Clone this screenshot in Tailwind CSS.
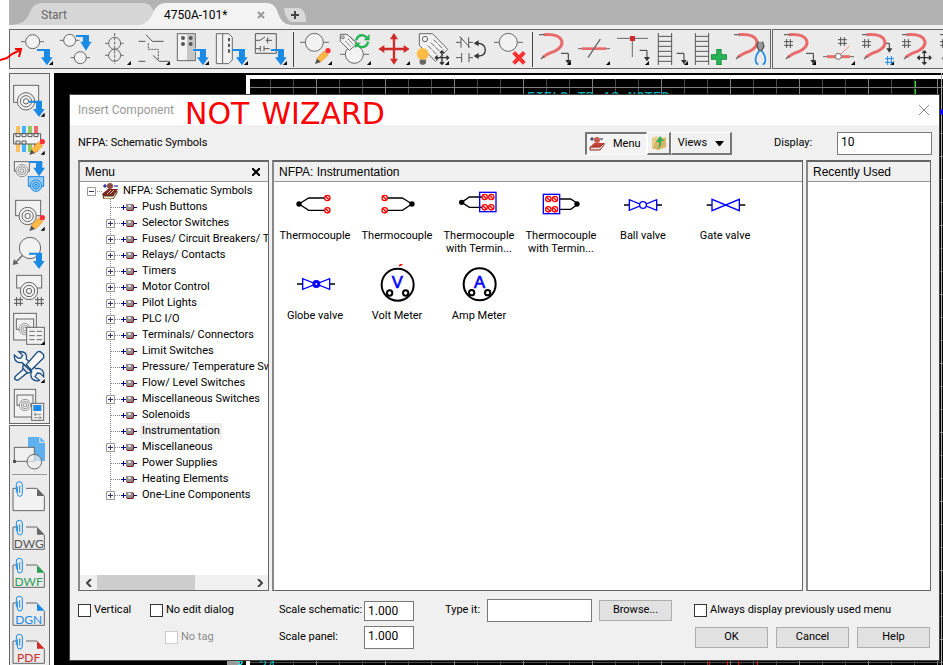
<!doctype html>
<html lang="en">
    <head>
        <meta charset="UTF-8" />
        <meta name="viewport" content="width=device-width, initial-scale=1.0" />
        <title>Insert Component</title>
        <script src="https://cdn.jsdelivr.net/npm/@tailwindcss/browser@4"></script>
    </head>

    <body class="relative flex h-screen flex-col overflow-hidden bg-white font-[Roboto,'Liberation_Sans',sans-serif] text-[11px] text-black">
        <!-- shared icon parts -->
        <svg class="absolute h-0 w-0" aria-hidden="true">
            <defs>
                <path id="insert" d="M0 0H39V25H47L30 49L12 25H21V6H0Z" fill="#1a8ae5" />
                <path id="more" d="M12 0V12H0Z" fill="#000" />
                <path id="step" d="M0 0H22V22" fill="none" stroke="#333" stroke-width="3" />
                <g id="pencil">
                    <path d="M0 49L6 32L18 43Z" fill="#555" />
                    <path d="M6 32L27 10L40 22L18 43Z" fill="#fdb944" stroke="#e59a2e" stroke-width="2" />
                    <circle cx="39" cy="9" r="8" fill="#ff3038" />
                </g>
                <g id="wire">
                    <path d="M10 3C75 -2 78 38 42 53Q20 60 8 71" fill="none" stroke="#e96a6a" stroke-width="9" />
                    <path d="M-4 3H12M2 76L11 67" stroke="#666" stroke-width="4" />
                </g>
                <g id="drop">
                    <use href="#step" />
                    <path d="M13 20H31L22 33Z" fill="#333" />
                </g>
                <path id="hash" d="M8 0V27M19 0V27M0 8H27M0 19H27" fill="none" stroke-width="3" />
                <path id="move" d="M-20 0H20M0 -20V20M-14 -6L-20 0L-14 6M14 -6L20 0L14 6M-6 -14L0 -20L6 -14M-6 14L0 20L6 14" fill="#333" stroke="#333" stroke-width="4" />
                <g id="target" fill="none" stroke="#666" stroke-width="3">
                    <circle r="26" fill="#f2f2f2" />
                    <circle r="17" />
                    <circle r="8" />
                </g>
                <g id="clip">
                    <path d="M39 70H48M78 70H111M39 70V137H133V94" fill="none" stroke="#666" stroke-width="3" />
                    <path d="M52 65V85Q52 94 59 94Q67 94 67 85V58Q67 50 58 50Q49 50 49 58V82M59 62V84" fill="none" stroke="#1a8ae5" stroke-width="3" />
                </g>
                <g id="part">
                    <path d="M0 8.500H5M2.500 6V11M13 8.500H16" stroke="#000080" />
                    <rect x="5" y="5" width="8" height="7" rx="2" fill="#7a1a1a" />
                    <rect x="5" y="5" width="7" height="6" rx="2" fill="#909090" />
                    <rect x="7" y="6" width="3" height="2" fill="#ddd" />
                </g>
                <g id="book">
                    <path d="M1 3H5M3 1V5M12 3H16" stroke="#000080" />
                    <circle cx="8" cy="3" r="3" fill="#8a4a40" />
                    <path d="M0 11L6 6H16L11 13H1Z" fill="#7d2620" />
                    <path d="M1 13H11L15 8V10L11 16H2Z" fill="#fff3d0" stroke="#5c3a20" />
                    <path d="M5 11L9 7M8 11L12 7" stroke="#c8b8a8" />
                </g>
                <g id="term" fill="#fff" stroke="#f00" stroke-width="4">
                    <circle r="8" />
                    <path d="M-5 -5L5 5" />
                </g>
            </defs>
        </svg>

        <!-- document tabs -->
        <nav class="relative ml-[9px] flex h-[25px] shrink-0 items-center bg-[#b2b2b2]">
            <svg class="absolute top-0 left-0 h-[25px] w-[300px]" viewBox="9 0 300 25" aria-hidden="true">
                <path d="M9 25Q25 25 29 14Q33 3 41 3H143Q151 3 154 12V25Z" fill="#d6d6d6" />
                <path d="M140 25Q149 23 153 13Q157 3 165 3H267Q275 3 278 13Q281 24 291 25Z" fill="#f3f3f3" />
                <path d="M291 22Q285 18 284 8H298Q305 8 306 20V22H291Z" fill="#d9d9d9" />
                <path d="M291 15H299M295 11V19" stroke="#444" stroke-width="2" />
            </svg>
            <button class="relative ml-8 w-[123px] pt-1 text-left text-[12px] leading-4 text-[#666]">Start</button>
            <button class="relative w-[93px] pt-1 text-left text-[12px] leading-4">4750A-101*</button>
            <button class="relative pt-1" aria-label="Close tab">
                <svg class="h-2 w-2" viewBox="0 0 8 8"><path d="M1 1L7 7M7 1L1 7" stroke="#999" stroke-width="2" /></svg>
            </button>
        </nav>

        <!-- top toolbars -->
        <div class="ml-[9px] flex h-[48px] shrink-0 gap-px overflow-hidden bg-[#f0f0f0] pt-1 pb-1">
            <div class="flex h-10 w-[762px] shrink-0 items-start border border-[#666] bg-[#ebebeb] pl-2">
                <svg class="h-[37px] w-[39px]" viewBox="54 90 117 111">
                    <g fill="#f2f2f2" stroke="#666" stroke-width="3"><circle cx="98" cy="125" r="21" /><path d="M63 125H77M119 125H132" /></g>
                    <use href="#insert" x="111" y="147" /><use href="#more" x="147" y="183" />
                </svg>
                <svg class="h-[37px] w-[39px]" viewBox="171 90 117 111">
                    <g fill="#f2f2f2" stroke="#666" stroke-width="3"><circle cx="209" cy="121" r="18" /><path d="M180 121H191M227 121H238" /><circle cx="241" cy="173" r="18" /><path d="M212 173H223M259 173H270" /></g>
                    <path d="M228 105H267V125H275L258 152L241 125H249V111H228Z" fill="#1a8ae5" />
                </svg>
                <svg class="h-[37px] w-[39px]" viewBox="288 90 117 111">
                    <g fill="none" stroke="#666" stroke-width="3"><circle cx="344" cy="130" r="18" /><circle cx="344" cy="166" r="18" /><path d="M315 130H326M362 130H371M315 166H326M362 166H371" /><path d="M344 99V192" stroke-dasharray="9 4" /></g>
                    <use href="#more" x="381" y="183" />
                </svg>
                <svg class="h-[37px] w-[39px]" viewBox="405 90 117 111">
                    <g fill="none" stroke="#555" stroke-width="3"><path d="M416 124H436M438 104L457 124H491M416 184H436M459 166L478 184H507" /><path d="M445 130V148H475V180" stroke-dasharray="6 3" /></g>
                    <use href="#more" x="498" y="183" />
                </svg>
                <svg class="h-[37px] w-[39px]" viewBox="522 90 117 111">
                    <rect x="532" y="101" width="54" height="81" fill="#f2f2f2" stroke="#666" stroke-width="3" /><path d="M561 102H585V180H561Z" fill="#c6c6c6" />
                    <g fill="#555"><circle cx="549" cy="114" r="6" /><circle cx="572" cy="114" r="6" /><circle cx="549" cy="132" r="6" /><circle cx="572" cy="132" r="6" /></g>
                    <use href="#insert" x="579" y="147" stroke="#ebebeb" stroke-width="3" paint-order="stroke" /><use href="#more" x="615" y="183" />
                </svg>
                <svg class="h-[37px] w-[39px]" viewBox="639 90 117 111">
                    <path d="M649 101H686L697 112V180L686 191H649ZM668 101V190" fill="#f2f2f2" stroke="#666" stroke-width="3" /><path d="M687 114V163" stroke="#555" stroke-width="6" stroke-dasharray="10 7" />
                    <use href="#insert" x="696" y="147" /><use href="#more" x="732" y="183" />
                </svg>
                <svg class="h-[37px] w-[39px]" viewBox="756 90 117 111">
                    <path d="M766 101H829V160H766ZM767 121H780L795 111M797 121H816M803 112V130M767 146H780M781 138V154M792 138V154M792 146H809" fill="none" stroke="#555" stroke-width="3" />
                    <use href="#insert" x="813" y="147" /><use href="#more" x="849" y="183" />
                </svg>
                <span class="mr-[3px] ml-[2px] h-[35px] w-px self-center bg-[#444]"></span>
                <svg class="h-[37px] w-[39px]" viewBox="21 90 117 111">
                    <g fill="#f2f2f2" stroke="#666" stroke-width="3"><circle cx="73" cy="127" r="27" /><path d="M30 127H46M100 127H117" /></g>
                    <use href="#pencil" x="75" y="143" /><use href="#more" x="114" y="183" />
                </svg>
                <svg class="h-[37px] w-[39px]" viewBox="138 90 117 111">
                    <g fill="#f2f2f2" stroke="#666" stroke-width="3"><circle cx="193" cy="163" r="27" /><path d="M150 163H166M220 163H237" /><path d="M151 103H171L203 130L178 151L151 124Z" /><circle cx="159" cy="112" r="4" /><path d="M166 123L182 140M174 117L190 134M182 113L196 128" stroke-dasharray="6 3" /></g>
                    <path d="M198 121Q204 104 220 106L230 112M235 125Q230 143 213 141L202 136" fill="none" stroke="#26b555" stroke-width="7" /><path d="M239 102V121H221ZM195 128H213L196 145Z" fill="#26b555" />
                    <use href="#more" x="231" y="183" />
                </svg>
                <svg class="h-[37px] w-[39px]" viewBox="255 90 117 111">
                    <path d="M275 147H349M312 110V184" stroke="#d12a2a" stroke-width="7" />
                    <path d="M265 147L283 135V159ZM359 147L341 135V159ZM312 99L300 118H324ZM312 194L300 176H324Z" fill="#d12a2a" /><use href="#more" x="348" y="183" />
                </svg>
                <svg class="h-[37px] w-[39px]" viewBox="372 90 117 111">
                    <g fill="#f2f2f2" stroke="#666" stroke-width="3"><path d="M388 101H428L473 148L437 184L388 136Z" /><circle cx="405" cy="117" r="8" /><path d="M414 137L444 167M423 128L453 158M431 119L461 149" stroke-dasharray="16 4" /></g>
                    <circle cx="398" cy="162" r="18" fill="#fdbd45" /><path d="M389 179H408V190L402 194H394L389 190Z" fill="#666" />
                    <use href="#move" x="456" y="173" /><use href="#more" x="465" y="183" />
                </svg>
                <svg class="h-[37px] w-[39px]" viewBox="489 90 117 111">
                    <path d="M501 127H515M516 112V143M512 109L543 143M539 112V143M539 127H552M501 173H517M518 159V187M540 159V187M540 173H552" fill="none" stroke="#555" stroke-width="3" />
                    <path d="M560 130H570Q589 133 589 150Q589 167 570 168H560" fill="none" stroke="#333" stroke-width="4" /><path d="M554 130L569 121V139ZM554 168L569 159V177Z" fill="#333" />
                </svg>
                <svg class="h-[37px] w-[39px]" viewBox="606 90 117 111">
                    <g fill="#f2f2f2" stroke="#666" stroke-width="3"><circle cx="658" cy="127" r="27" /><path d="M615 127H631M685 127H702" /></g>
                    <path d="M674 157L706 190M706 157L674 190" stroke="#ff3030" stroke-width="12" />
                </svg>
                <span class="mr-[3px] ml-[2px] h-[35px] w-px self-center bg-[#444]"></span>
                <svg class="h-[37px] w-[39px]" viewBox="741 90 117 111">
                    <use href="#wire" x="754" y="101" /><use href="#drop" x="816" y="160" /><use href="#more" x="834" y="183" />
                </svg>
                <svg class="h-[37px] w-[39px]" viewBox="858 90 117 111">
                    <path d="M867 146H963" stroke="#666" stroke-width="3" /><path d="M878 146H952" stroke="#e96a6a" stroke-width="8" /><path d="M897 173L934 117" stroke="#666" stroke-width="4" /><use href="#more" x="951" y="183" />
                </svg>
                <svg class="h-[37px] w-[39px]" viewBox="15 90 117 111">
                    <path d="M24 115H117M70 115V171" stroke="#666" stroke-width="3" /><path d="M63 108H78V123H63Z" fill="#d12a2a" /><use href="#drop" x="92" y="151" /><use href="#more" x="108" y="183" />
                </svg>
                <svg class="h-[37px] w-[39px]" viewBox="132 90 117 111">
                    <path d="M148 99V195M188 99V195M148 109H188M148 124H188M148 139H188M148 154H188M148 169H188M148 184H188" stroke="#555" stroke-width="3" /><use href="#drop" x="203" y="160" /><use href="#more" x="225" y="183" />
                </svg>
                <svg class="h-[37px] w-[39px]" viewBox="249 90 117 111">
                    <path d="M259 99V195M299 99V195M259 109H299M259 124H299M259 139H299M259 154H299M259 169H299M259 184H299" stroke="#555" stroke-width="3" />
                    <path d="M306 171H354M330 147V195" stroke="#168a3c" stroke-width="16" /><path d="M308 171H352M330 149V193" stroke="#26b555" stroke-width="11" />
                </svg>
                <svg class="h-[37px] w-[39px]" viewBox="366 90 117 111">
                    <use href="#wire" x="379" y="101" />
                    <path d="M448 125L444 139L451 152H458L465 139L461 125" fill="#999" stroke="#555" stroke-width="4" /><path d="M451 152Q438 168 440 183Q441 192 448 193M458 152Q471 168 469 183Q468 192 461 193" fill="none" stroke="#1a8ae5" stroke-width="5" />
                </svg>
            </div>
            <div class="flex h-10 shrink-0 items-start border border-[#666] bg-[#ebebeb] pl-2">
                <svg class="h-[37px] w-[39px]" viewBox="513 90 117 111">
                    <use href="#wire" x="526" y="101" /><use href="#hash" x="522" y="117" stroke="#555" /><use href="#drop" x="588" y="160" /><use href="#more" x="606" y="183" />
                </svg>
                <svg class="h-[37px] w-[39px]" viewBox="630 90 117 111">
                    <use href="#hash" x="684" y="111" stroke="#555" /><path d="M639 170H732" stroke="#666" stroke-width="3" /><path d="M651 170H720" stroke="#e96a6a" stroke-width="9" /><path d="M693 162L718 138" stroke="#ff5050" stroke-width="2" /><circle cx="685" cy="169" r="9" fill="#fff" stroke="#666" stroke-width="3" /><use href="#more" x="723" y="183" />
                </svg>
                <svg class="h-[37px] w-[39px]" viewBox="747 90 117 111">
                    <use href="#wire" x="760" y="101" /><use href="#hash" x="756" y="117" stroke="#555" /><path d="M829 130H838V147" fill="none" stroke="#333" stroke-width="3" /><path d="M829 145H847L838 158Z" fill="#333" /><use href="#more" x="840" y="183" /><use href="#hash" x="825" y="168" stroke="#1a8ae5" />
                </svg>
                <svg class="h-[37px] w-[39px]" viewBox="864 90 117 111">
                    <use href="#wire" x="880" y="101" /><use href="#hash" x="876" y="117" stroke="#555" /><use href="#move" x="943" y="173" />
                </svg>
                <svg class="h-[37px] w-[39px]" viewBox="981 90 117 111">
                    <use href="#wire" x="994" y="101" /><use href="#hash" x="990" y="117" stroke="#555" />
                </svg>
            </div>
        </div>

        <div class="ml-[9px] flex min-h-0 flex-1 gap-1">
            <!-- side toolbars -->
            <aside class="flex w-[41px] shrink-0 flex-col gap-px">
                <div class="shrink-0 border border-[#666] bg-[#ebebeb] pt-[7px]">
                    <svg class="h-[38px] w-[38px]" viewBox="30 33 114 114">
                        <rect x="41" y="46" width="75" height="51" fill="#f2f2f2" stroke="#666" stroke-width="3" /><use href="#target" x="78" y="94" /><use href="#insert" x="87" y="92" /><use href="#more" x="122" y="128" />
                    </svg>
                    <svg class="h-[38px] w-[38px]" viewBox="30 147 114 114">
                        <g stroke-width="12"><path d="M54 168V246" stroke="#fcc068" /><path d="M72 168V246" stroke="#45b4ff" /><path d="M90 168V246" stroke="#92cb62" /><path d="M108 168V246" stroke="#ed6b6b" /></g>
                        <path d="M41 191H122V222H41Z" fill="#f4f4f4" stroke="#555" stroke-width="3" /><path d="M48 191V200H60V191M66 191V200H78V191M84 191V200H96V191M102 191V200H114V191M48 222V213H60V222M66 222V213H78V222" fill="none" stroke="#555" stroke-width="3" />
                        <use href="#pencil" x="88" y="206" /><use href="#more" x="122" y="242" />
                    </svg>
                    <svg class="h-[38px] w-[38px]" viewBox="30 261 114 114">
                        <rect x="43" y="275" width="45" height="28" fill="#f2f2f2" stroke="#666" stroke-width="3" /><use href="#target" transform="translate(66 302) scale(.7)" />
                        <path d="M88 273H127V293H135L117 319L100 293H108V279H88Z" fill="#1a8ae5" />
                        <g fill="#9bcbf0" stroke="#1a8ae5" stroke-width="3"><rect x="85" y="320" width="46" height="29" /><circle cx="108" cy="347" r="17" /><circle cx="108" cy="347" r="10" /><circle cx="108" cy="347" r="4" /></g>
                    </svg>
                    <svg class="h-[38px] w-[38px]" viewBox="30 375 114 114">
                        <rect x="47" y="391" width="75" height="46" fill="#f2f2f2" stroke="#666" stroke-width="3" /><use href="#target" x="83" y="438" /><use href="#pencil" x="88" y="434" /><use href="#more" x="122" y="470" />
                    </svg>
                    <svg class="h-[38px] w-[38px]" viewBox="30 489 114 114">
                        <circle cx="90" cy="534" r="32" fill="#f2f2f2" stroke="#666" stroke-width="3" /><path d="M68 556L46 578" stroke="#666" stroke-width="4" /><path d="M38 585L42 567L56 581Z" fill="#666" /><use href="#insert" x="87" y="548" />
                    </svg>
                    <svg class="h-[38px] w-[38px]" viewBox="30 3 114 114">
                        <rect x="50" y="16" width="75" height="38" fill="#f2f2f2" stroke="#666" stroke-width="3" /><use href="#target" x="87" y="63" /><use href="#hash" x="42" y="81" stroke="#555" /><use href="#hash" x="105" y="81" stroke="#555" />
                    </svg>
                    <svg class="h-[38px] w-[38px]" viewBox="30 117 114 114">
                        <g fill="#f2f2f2" stroke="#666" stroke-width="3"><rect x="41" y="130" width="68" height="80" /><rect x="49" y="147" width="52" height="31" /></g><use href="#target" transform="translate(74 177) scale(.65)" />
                        <rect x="80" y="172" width="53" height="51" fill="#f2f2f2" stroke="#666" stroke-width="3" /><path d="M88 184H104M110 184H126M88 197H104M110 197H126M88 209H104M110 209H126" stroke="#666" stroke-width="3" /><use href="#more" x="122" y="213" />
                    </svg>
                    <svg class="h-[38px] w-[38px]" viewBox="30 231 114 114">
                        <g fill="#f7f7f7" stroke="#1d4f80" stroke-width="4"><path d="M57 245L68 256L62 265L54 264L43 255Q42 274 57 278L66 277L94 305Q89 321 100 329Q109 335 118 331L105 320L112 309L121 310L131 320Q133 298 116 295L107 296L79 267Q82 250 69 246Z" /><path d="M79 284L112 246Q119 242 125 248L131 254V263L94 300Z" /><path d="M72 296L83 307L56 329Q50 333 45 328Q42 322 48 317Z" /><path d="M70 282L95 305L83 310L68 295Z" fill="#ddd" /></g>
                        <use href="#more" x="122" y="327" />
                    </svg>
                    <svg class="h-[38px] w-[38px]" viewBox="30 345 114 114">
                        <g fill="#f2f2f2" stroke="#666" stroke-width="3"><rect x="43" y="358" width="64" height="83" /><rect x="51" y="375" width="48" height="31" /></g><use href="#target" transform="translate(75 405) scale(.65)" />
                        <rect x="95" y="400" width="36" height="51" fill="#f2f2f2" stroke="#666" stroke-width="3" /><rect x="100" y="405" width="24" height="18" fill="#1a8ae5" /><path d="M102 433H124M108 428L102 433L108 438M102 443H124M118 438L124 443L118 448" fill="none" stroke="#666" stroke-width="2" />
                    </svg>
                </div>
                <div class="flex-1 border border-[#666] bg-[#ebebeb] pt-2">
                    <svg class="h-[38px] w-[38px]" viewBox="30 492 114 114">
                        <path d="M84 501H118V518H135V573H84Z" fill="#5fb0ef" /><path d="M121 501L135 515H121Z" fill="#5fb0ef" />
                        <rect x="43" y="532" width="60" height="42" fill="#f0f0f0" stroke="#666" stroke-width="3" /><circle cx="103" cy="575" r="22" fill="#f0f0f0aa" stroke="#666" stroke-width="3" /><rect x="39" y="570" width="9" height="9" fill="#555" />
                    </svg>
                    <div class="mx-[2px] mt-[2px] mb-1 h-px bg-[#999]"></div>
                    <svg class="h-[38px] w-[38px]" viewBox="30 42 114 114">
                        <path d="M40 71H111L133 93V137H40Z" fill="#f2f2f2" /><use href="#clip" /><path d="M111 69V93H134Z" fill="#666" />
                    </svg>
                    <svg class="h-[38px] w-[38px]" viewBox="30 40 114 114">
                        <use href="#clip" /><path d="M111 69V93H134Z" fill="#666" />
                        <text x="86" y="132" text-anchor="middle" font-family="Lato, sans-serif" font-size="36" fill="#555">DWG</text>
                    </svg>
                    <svg class="h-[38px] w-[38px]" viewBox="30 40 114 114">
                        <use href="#clip" /><path d="M111 69V93H134Z" fill="#2f9e57" />
                        <text x="86" y="132" text-anchor="middle" font-family="Lato, sans-serif" font-size="36" fill="#2f9e57">DWF</text>
                    </svg>
                    <svg class="h-[38px] w-[38px]" viewBox="30 40 114 114">
                        <use href="#clip" /><path d="M111 69V93H134Z" fill="#1a8ae5" />
                        <text x="86" y="132" text-anchor="middle" font-family="Lato, sans-serif" font-size="36" fill="#1a8ae5">DGN</text>
                    </svg>
                    <svg class="h-[38px] w-[38px]" viewBox="30 40 114 114">
                        <use href="#clip" /><path d="M111 69V93H134Z" fill="#d12a2a" />
                        <text x="86" y="132" text-anchor="middle" font-family="Lato, sans-serif" font-size="36" fill="#d12a2a">PDF</text>
                    </svg>
                </div>
            </aside>

            <!-- drawing area -->
            <main class="relative flex min-w-0 flex-1 bg-black pt-[21px] pr-[3px] pb-1 pl-[15px]">
                <svg class="absolute inset-0 h-full w-full" aria-hidden="true">
                    <defs>
                        <pattern id="grid" x="193" y="14" width="69" height="69" patternUnits="userSpaceOnUse">
                            <path d="M23.500 0V69M46.500 0V69M0 23.500H69M0 46.500H69" stroke="#4a4a4a" />
                            <path d="M.5 0V69M0 .5H69" stroke="#808080" />
                        </pattern>
                    </defs>
                    <rect x="194" y="6" width="100%" height="100%" fill="url(#grid)" />
                    <path d="M194 600V4H900" fill="none" stroke="#fff" stroke-width="4" />
                    <path d="M861.500 8V21" stroke="#0f0" stroke-dasharray="6 2" />
                    <path d="M887.500 0V600" stroke="#aaa" />
                    <path d="M886 39H889" stroke="#00f" stroke-width="5" />
                    <path d="M655.500 587V592M673.500 587V592M684.500 587V592M703.500 587V592" stroke="#f00" />
                    <rect x="173" y="587" width="13" height="6" fill="#999" />
                    <g fill="#00b4b4" font-family="Liberation Mono, monospace" font-size="14">
                        <text x="473" y="29">FIELD TB AS NOTED</text>
                        <text x="205" y="597">24</text>
                        <text x="173" y="597" fill="#0ff">-3</text>
                    </g>
                </svg>

                <section class="relative flex min-w-0 flex-1 flex-col border border-[#444] bg-[#f0f0f0]" role="dialog" aria-labelledby="dialog-title">
                    <header class="flex h-[30px] shrink-0 items-center justify-between bg-white pr-[9px] pl-2">
                        <h1 id="dialog-title" class="text-[12px] text-[#999]">Insert Component</h1>
                        <button aria-label="Close">
                            <svg class="h-3 w-3" viewBox="0 0 12 12"><path d="M1 1L11 11M11 1L1 11" stroke="#888" /></svg>
                        </button>
                    </header>

                    <div class="flex min-h-0 flex-1 flex-col pt-[7px] pr-[7px] pb-[11px] pl-2">
                        <div class="flex h-[23px] shrink-0 items-center">
                            <h2 class="flex-1">NFPA: Schematic Symbols</h2>
                            <button class="flex h-[23px] w-[62px] items-center gap-2 border border-t-2 border-l-2 border-white border-t-[#777] border-l-[#777] bg-[#f4f4f4] pl-[2px]">
                                <svg class="h-4 w-4" viewBox="0 0 16 16"><path d="M1 3H5M3 1V5M11 3H14" stroke="#225" /><circle cx="8" cy="4" r="3" fill="#c65b50" /><path d="M5 7H15L11 11H1Z" fill="#c04438" /><path d="M1 11H11L15 7V9L11 14H1Z" fill="#f6dcd0" stroke="#8a2a22" /></svg>
                                Menu
                            </button>
                            <button class="flex h-[23px] w-[24px] items-center justify-center border border-r-2 border-b-2 border-white border-r-[#777] border-b-[#777]" aria-label="Up one level">
                                <svg class="h-4 w-4" viewBox="0 0 16 16"><path d="M1 3L6 1L7 3L15 2V12L7 15L1 13Z" fill="#e6cd8a" /><path d="M1 13L5 6L15 3V12L7 15Z" fill="#d8b568" /><path d="M6 14Q11 12 10 6H13L9 1L5 7H8Q9 11 6 14Z" fill="#2fae5b" /></svg>
                            </button>
                            <button class="flex h-[23px] w-[61px] items-center justify-center gap-2 border border-r-2 border-b-2 border-white border-r-[#777] border-b-[#777]">
                                Views
                                <svg class="h-[5px] w-[9px]" viewBox="0 0 9 5"><path d="M0 0H9L5 5H4Z" /></svg>
                            </button>
                            <label for="display" class="ml-[42px] w-[63px]">Display:</label>
                            <input id="display" value="10" class="h-[23px] w-[95px] border border-[#7a7a7a] bg-white px-[3px] pb-1 text-[12px]" />
                        </div>

                        <div class="mt-[5px] mr-px flex min-h-0 flex-1 gap-[3px] font-['Liberation_Sans',Arial,sans-serif]">
                            <!-- symbol menu -->
                            <div class="flex w-[191px] shrink-0 flex-col overflow-hidden border border-t-2 border-l-2 border-[#666] border-l-[#888] bg-white">
                                <div class="flex h-5 shrink-0 items-center justify-between border-b border-[#999] bg-[#f0f0f0] pr-2 pl-[5px] text-[12px]">
                                    Menu
                                    <button aria-label="Close menu"><svg class="h-2 w-2" viewBox="0 0 8 8"><path d="M0 0L8 8M8 0L0 8" stroke="#000" stroke-width="2" /></svg></button>
                                </div>
                                <ul class="min-h-0 flex-1 overflow-hidden pt-px font-[Roboto,sans-serif] whitespace-nowrap" role="tree" id="tree">
                                    <li class="flex h-4 items-center">
                                        <svg class="h-4 w-[41px] shrink-0" viewBox="0 0 41 16"><path d="M7.500 4.500H15.500V12.500H7.500Z" fill="#fff" stroke="#999" /><path d="M9 8.500H14" stroke="#336" /><path d="M17 8.500H22" stroke="#999" stroke-dasharray="1 1" /><use href="#book" x="22" /></svg>
                                        <span class="px-[2px]">NFPA: Schematic Symbols</span>
                                    </li>
                                </ul>
                                <div class="flex h-[15px] shrink-0 items-center bg-[#f0f0f0]">
                                    <button class="flex w-[17px] justify-center" aria-label="Scroll left"><svg class="h-2 w-[6px]" viewBox="0 0 6 8"><path d="M5 0L1 4L5 8" fill="none" stroke="#444" stroke-width="2" /></svg></button>
                                    <div class="flex-1"><div class="h-[15px] w-[98px] bg-[#cdcdcd]"></div></div>
                                    <button class="flex w-[17px] justify-center" aria-label="Scroll right"><svg class="h-2 w-[6px]" viewBox="0 0 6 8"><path d="M1 0L5 4L1 8" fill="none" stroke="#444" stroke-width="2" /></svg></button>
                                </div>
                            </div>

                            <!-- symbols of the chosen group -->
                            <div class="flex min-w-0 flex-1 flex-col border border-t-2 border-l-2 border-[#666] border-l-[#888] bg-white">
                                <h3 class="flex h-5 shrink-0 items-center border-b border-[#999] bg-[#f0f0f0] pl-[5px] text-[12px]">NFPA: Instrumentation</h3>
                                <div class="flex flex-wrap pt-[2px] font-[Roboto,sans-serif] leading-[13px]">
                                    <button class="flex h-20 w-[82px] flex-col items-center gap-[5px]">
                                        <svg class="h-10 w-[82px]" viewBox="12 12 246 120"><path d="M87 72L116 54H164M87 72L116 91H164" fill="none" stroke="#000" stroke-width="4" /><circle cx="87" cy="72" r="8" /><use href="#term" x="172" y="54" /><use href="#term" x="172" y="91" /></svg>
                                        Thermocouple
                                    </button>
                                    <button class="flex h-20 w-[82px] flex-col items-center gap-[5px]">
                                        <svg class="h-10 w-[82px]" viewBox="258 12 246 120"><path d="M426 72L397 54H352M426 72L397 91H352" fill="none" stroke="#000" stroke-width="4" /><circle cx="426" cy="72" r="8" /><use href="#term" x="344" y="54" /><use href="#term" x="344" y="91" /></svg>
                                        Thermocouple
                                    </button>
                                    <button class="flex h-20 w-[82px] flex-col items-center gap-[5px]">
                                        <svg class="h-10 w-[82px]" viewBox="504 12 246 120"><path d="M575 67L598 51H638M575 67L598 82H638" fill="none" stroke="#000" stroke-width="4" /><circle cx="575" cy="67" r="8" /><rect x="629" y="37" width="49" height="58" fill="none" stroke="#00f" stroke-width="4" /><use href="#term" x="644" y="51" /><use href="#term" x="664" y="51" /><use href="#term" x="644" y="82" /><use href="#term" x="664" y="82" /></svg>
                                        <span>Thermocouple<br />with Termin...</span>
                                    </button>
                                    <button class="flex h-20 w-[82px] flex-col items-center gap-[5px]">
                                        <svg class="h-10 w-[82px]" viewBox="750 12 246 120"><path d="M925 72L902 57H868M925 72L902 88H868" fill="none" stroke="#000" stroke-width="4" /><circle cx="921" cy="72" r="8" /><rect x="820" y="43" width="49" height="58" fill="none" stroke="#00f" stroke-width="4" /><use href="#term" x="835" y="57" /><use href="#term" x="855" y="57" /><use href="#term" x="835" y="88" /><use href="#term" x="855" y="88" /></svg>
                                        <span>Thermocouple<br />with Termin...</span>
                                    </button>
                                    <button class="flex h-20 w-[82px] flex-col items-center gap-[5px]">
                                        <svg class="h-10 w-[82px]" viewBox="0 0 246 120"><path d="M66 63H82M164 63H180" stroke="#000" stroke-width="4" /><path d="M82 47V79L113 66V60ZM164 47V79L133 66V60Z" fill="#fff" stroke="#00f" stroke-width="4" /><circle cx="123" cy="63" r="10" fill="#fff" stroke="#00f" stroke-width="4" /></svg>
                                        Ball valve
                                    </button>
                                    <button class="flex h-20 w-[82px] flex-col items-center gap-[5px]">
                                        <svg class="h-10 w-[82px]" viewBox="0 0 246 120"><path d="M68 63H84M166 63H184" stroke="#000" stroke-width="4" /><path d="M84 46V80L166 46V80Z" fill="#fff" stroke="#00f" stroke-width="4" /></svg>
                                        Gate valve
                                    </button>
                                    <button class="flex h-20 w-[82px] flex-col items-center gap-[5px]">
                                        <svg class="h-10 w-[82px]" viewBox="12 252 246 120"><path d="M81 312H98M179 312H195" stroke="#000" stroke-width="4" /><path d="M98 296V328L179 296V328Z" fill="#fff" stroke="#00f" stroke-width="4" /><circle cx="139" cy="312" r="12" fill="#00f" /><circle cx="139" cy="312" r="3" fill="#fff" /></svg>
                                        Globe valve
                                    </button>
                                    <button class="flex h-20 w-[82px] flex-col items-center gap-[5px]">
                                        <svg class="h-10 w-[82px]" viewBox="258 252 246 120"><g fill="#fff" stroke="#000" stroke-width="6"><circle cx="383" cy="314" r="48" /><circle cx="359" cy="339" r="8" /><circle cx="407" cy="339" r="8" /></g><path d="M387 257L397 253" stroke="#f00" stroke-width="5" /><text x="382" y="324" text-anchor="middle" font-family="Liberation Sans, sans-serif" font-size="50" fill="#00f" stroke="#00f" stroke-width="2">V</text></svg>
                                        Volt Meter
                                    </button>
                                    <button class="flex h-20 w-[82px] flex-col items-center gap-[5px]">
                                        <svg class="h-10 w-[82px]" viewBox="504 252 246 120"><g fill="#fff" stroke="#000" stroke-width="6"><circle cx="629" cy="313" r="48" /><circle cx="605" cy="338" r="8" /><circle cx="653" cy="338" r="8" /></g><text x="629" y="323" text-anchor="middle" font-family="Liberation Sans, sans-serif" font-size="50" fill="#00f" stroke="#00f" stroke-width="2">A</text></svg>
                                        Amp Meter
                                    </button>
                                </div>
                            </div>

                            <div class="w-[125px] shrink-0 border border-t-2 border-l-2 border-[#666] border-l-[#888] bg-white">
                                <h3 class="flex h-5 items-center border-b border-[#999] bg-[#f0f0f0] pl-[5px] text-[12px]">Recently Used</h3>
                            </div>
                        </div>

                        <!-- options -->
                        <div class="mt-2 grid shrink-0 grid-cols-[201px_166px_1fr_238px] items-center gap-y-1">
                            <div class="flex items-center">
                                <label class="flex w-[72px] items-center gap-[3px]"><input type="checkbox" class="h-[13px] w-[13px] appearance-none border border-[#333] bg-white" />Vertical</label>
                                <label class="flex items-center gap-[3px]"><input type="checkbox" class="h-[13px] w-[13px] appearance-none border border-[#333] bg-white" />No edit dialog</label>
                            </div>
                            <div class="flex items-center">
                                <label for="scale-schematic" class="w-[85px]">Scale schematic:</label>
                                <input id="scale-schematic" value="1.000" class="h-5 w-[50px] border border-[#7a7a7a] bg-white px-[3px] text-[12px]" />
                            </div>
                            <div class="flex items-center">
                                <label for="type-it" class="w-[42px]">Type it:</label>
                                <input id="type-it" class="h-[23px] w-[105px] border border-[#7a7a7a] bg-white px-[3px]" />
                                <button class="ml-[7px] h-[21px] w-[73px] border border-[#adadad] bg-[#e1e1e1]">Browse...</button>
                            </div>
                            <label class="flex items-center gap-[3px] whitespace-nowrap"><input type="checkbox" class="h-[13px] w-[13px] appearance-none border border-[#333] bg-white" />Always display previously used menu</label>

                            <label class="ml-[87px] flex items-center gap-[3px] text-[#8a8a8a]"><input type="checkbox" disabled class="h-[13px] w-[13px] appearance-none border border-[#ccc] bg-white" />No tag</label>
                            <div class="flex items-center">
                                <label for="scale-panel" class="w-[85px]">Scale panel:</label>
                                <input id="scale-panel" value="1.000" class="h-[23px] w-[50px] border border-[#7a7a7a] bg-white px-[3px] pb-1 text-[12px]" />
                            </div>
                            <div class="col-span-2 flex justify-end gap-2 pr-[2px]">
                                <button class="h-[21px] w-[73px] border border-[#adadad] bg-[#e1e1e1]">OK</button>
                                <button class="h-[21px] w-[73px] border border-[#adadad] bg-[#e1e1e1]">Cancel</button>
                                <button class="h-[21px] w-[73px] border border-[#adadad] bg-[#e1e1e1]">Help</button>
                            </div>
                        </div>
                    </div>
                </section>
            </main>
        </div>

        <!-- red notes -->
        <svg class="absolute top-[44px] left-0 h-5 w-6" viewBox="0 0 24 20" aria-hidden="true"><path d="M0 16L7 14L12 10L20 6M15 5L21 5L19 13" fill="none" stroke="#f00" stroke-width="2" /></svg>
        <p class="absolute top-[98px] left-[185px] flex gap-3 font-['DejaVu_Sans',sans-serif] text-[30px] leading-8 text-[#f00]"><span>NOT</span><span>WIZARD</span></p>

        <script>
            const groups = [
                ["Push Buttons"],
                ["Selector Switches", true],
                ["Fuses/ Circuit Breakers/ Tr", true],
                ["Relays/ Contacts", true],
                ["Timers", true],
                ["Motor Control", true],
                ["Pilot Lights", true],
                ["PLC I/O", true],
                ["Terminals/ Connectors", true],
                ["Limit Switches"],
                ["Pressure/ Temperature Sw"],
                ["Flow/ Level Switches"],
                ["Miscellaneous Switches", true],
                ["Solenoids"],
                ["Instrumentation"],
                ["Miscellaneous", true],
                ["Power Supplies"],
                ["Heating Elements"],
                ["One-Line Components", true],
            ];

            const plus =
                '<path d="M26.5 4.5H34.5V12.5H26.5Z" fill="#fff" stroke="#999" /><path d="M28 8.5H33M30.5 6V11" stroke="#336" />';

            document.querySelector("#tree").innerHTML += groups
                .map(([name, children], i) => {
                    const end = i === groups.length - 1 ? 8 : 16;
                    const chosen = name === "Instrumentation" ? "bg-[#f0f0f0]" : "";
                    return `<li class="flex h-4 items-center">
                        <svg class="h-4 w-[60px] shrink-0" viewBox="0 0 60 16">
                            <path d="M30.5 0V${end}M31 8.500H41" stroke="#888" stroke-dasharray="1 1" />
                            ${children ? plus : ""}<use href="#part" x="41" />
                        </svg>
                        <span class="px-[2px] ${chosen}">${name}</span>
                    </li>`;
                })
                .join("");
        </script>
    </body>
</html>
